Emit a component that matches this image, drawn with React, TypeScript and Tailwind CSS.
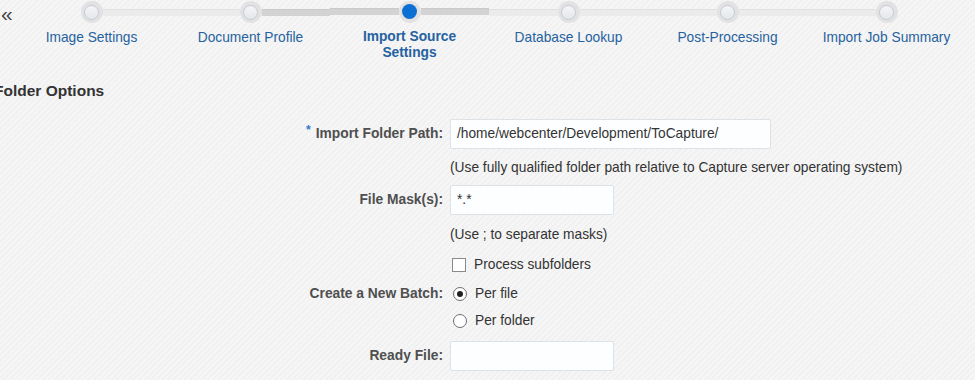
import React from "react";

const steps = [
  { label: "Image Settings" },
  { label: "Document Profile" },
  { label: "Import Source Settings", active: true },
  { label: "Database Lookup" },
  { label: "Post-Processing" },
  { label: "Import Job Summary" },
];

const darkLeft = [false, false, true, false, false, false];
const darkRight = [false, true, true, false, false, false];

function Segment({ hidden, dark }: { hidden?: boolean; dark?: boolean }) {
  if (hidden) return <div className="flex-1" />;
  return (
    <div
      className={
        dark
          ? "flex-1 h-[7px] bg-[#d3d3d3] border-t border-[#c9c9c9]"
          : "flex-1 h-[7px] bg-[#ebebeb] border-t border-[#e0e0e0]"
      }
    />
  );
}

function Stop({ i }: { i: number }) {
  const s = steps[i];
  return (
    <div className="w-[159px] flex flex-col items-center">
      <div className="w-full h-[24px] flex items-center">
        <Segment hidden={i === 0} dark={darkLeft[i]} />
        <div className="w-[22px] h-[22px] rounded-full bg-[#e2e2e2] flex items-center justify-center shrink-0">
          {s.active ? (
            <div className="w-[15px] h-[15px] rounded-full bg-[#0b6fd3]" />
          ) : (
            <div className="w-[15px] h-[15px] rounded-full border border-[#c5cbd2] bg-gradient-to-b from-[#f4f5f7] to-[#e4e7eb]" />
          )}
        </div>
        <Segment hidden={i === steps.length - 1} dark={darkRight[i]} />
      </div>
      <div
        className={
          "mt-[6px] w-[140px] text-[13.75px] leading-[16px] text-center text-[#26629f] " +
          (s.active ? "font-bold" : "")
        }
      >
        {s.label}
      </div>
    </div>
  );
}

function Label({ children, required }: { children: React.ReactNode; required?: boolean }) {
  return (
    <div className="w-[443px] shrink-0 text-right font-bold text-[13.8px] leading-[16px] text-[#4f4f4f]">
      {required && <span className="text-[#2a7bd0] text-[12px] relative -top-[4px] mr-[5px]">*</span>}
      {children}
    </div>
  );
}

function TextBox({ value, width }: { value?: string; width: string }) {
  return (
    <div
      className={
        "ml-[7px] h-[30px] bg-[#fdfeff] border border-[#dde2e7] rounded-[2px] flex items-center px-[6px] text-[13.75px] text-[#333] whitespace-nowrap overflow-hidden " +
        width
      }
    >
      {value}
    </div>
  );
}

export default function App() {
  return (
    <div
      className="w-[975px] h-[380px] overflow-hidden bg-[#f4f4f4] bg-[repeating-linear-gradient(135deg,#f6f6f6_0px,#f6f6f6_2px,#f1f1f1_2px,#f1f1f1_4px)] text-[#333]"
      style={{ fontFamily: '"Liberation Sans", Arial, sans-serif' }}
    >
      {/* train */}
      <div className="h-[61px] flex">
        <div className="w-[12px] shrink-0 relative">
          <span className="absolute left-[1px] top-[2px] text-[21px] leading-[24px] text-[#444]">«</span>
        </div>
        <div className="flex">
          {steps.map((_, i) => (
            <Stop key={i} i={i} />
          ))}
        </div>
      </div>

      <div className="mt-[20px] -ml-[6px] h-[20px] leading-[20px] text-[15.5px] font-bold text-[#333] whitespace-nowrap">
        Folder Options
      </div>

      <div className="mt-[18px] flex items-center">
        <Label required>Import Folder Path:</Label>
        <TextBox value="/home/webcenter/Development/ToCapture/" width="w-[321px]" />
      </div>
      <div className="mt-[11px] ml-[450px] text-[13.75px] leading-[16px] text-[#333]">
        (Use fully qualified folder path relative to Capture server operating system)
      </div>

      <div className="mt-[9px] flex items-center">
        <Label>File Mask(s):</Label>
        <TextBox value="*.*" width="w-[164px]" />
      </div>
      <div className="mt-[12px] ml-[450px] text-[13.75px] leading-[16px] text-[#333]">
        (Use ; to separate masks)
      </div>

      <div className="mt-[14px] ml-[452px] flex items-center h-[16px] text-[13.75px] text-[#333]">
        <div className="w-[14px] h-[14px] border border-[#8a8a8a] bg-white" />
        <span className="ml-[8px]">Process subfolders</span>
      </div>

      <div className="mt-[13px] flex items-center h-[16px]">
        <Label>Create a New Batch:</Label>
        <div className="ml-[10px] flex items-center text-[13.75px] text-[#333]">
          <div className="w-[14px] h-[14px] rounded-full border border-[#6f6f6f] bg-white flex items-center justify-center">
            <div className="w-[6px] h-[6px] rounded-full bg-[#222]" />
          </div>
          <span className="ml-[8px]">Per file</span>
        </div>
      </div>
      <div className="mt-[11px] ml-[453px] flex items-center h-[16px] text-[13.75px] text-[#333]">
        <div className="w-[14px] h-[14px] rounded-full border border-[#6f6f6f] bg-white" />
        <span className="ml-[8px]">Per folder</span>
      </div>

      <div className="mt-[12px] flex items-center">
        <Label>Ready File:</Label>
        <TextBox width="w-[164px]" />
      </div>
    </div>
  );
}
